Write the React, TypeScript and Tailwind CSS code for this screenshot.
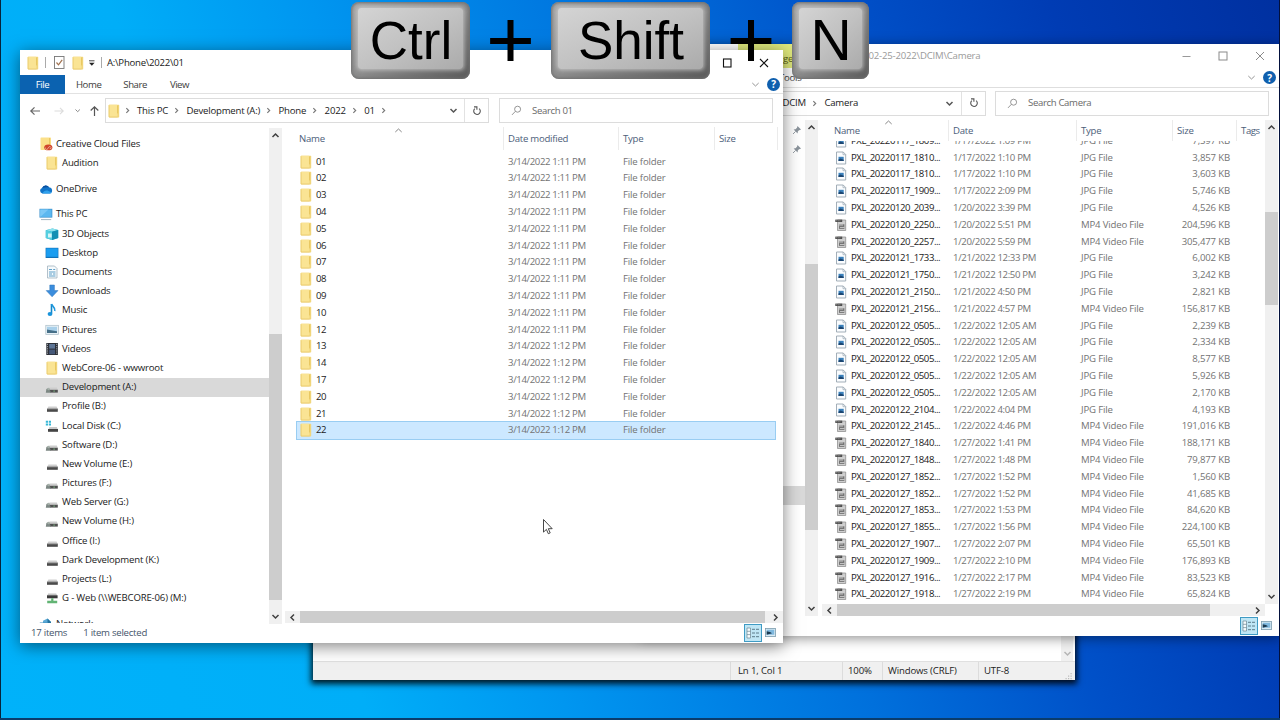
import React from "react";
import clsx from "clsx";

type IconName =
  | "folder"
  | "ccfolder"
  | "onedrive"
  | "pc"
  | "cube"
  | "desktop"
  | "docs"
  | "download"
  | "music"
  | "pictures"
  | "videos"
  | "drive"
  | "shared"
  | "windrive"
  | "netdrive"
  | "network";

interface NavEntry {
  label: string;
  icon: IconName;
  root?: boolean;
  gap?: boolean;
  active?: boolean;
}

const NAV: NavEntry[] = [
  { label: "Creative Cloud Files", icon: "ccfolder", root: true },
  { label: "Audition", icon: "folder" },
  { label: "OneDrive", icon: "onedrive", root: true, gap: true },
  { label: "This PC", icon: "pc", root: true, gap: true },
  { label: "3D Objects", icon: "cube" },
  { label: "Desktop", icon: "desktop" },
  { label: "Documents", icon: "docs" },
  { label: "Downloads", icon: "download" },
  { label: "Music", icon: "music" },
  { label: "Pictures", icon: "pictures" },
  { label: "Videos", icon: "videos" },
  { label: "WebCore-06 - wwwroot", icon: "folder" },
  { label: "Development (A:)", icon: "shared", active: true },
  { label: "Profile (B:)", icon: "drive" },
  { label: "Local Disk (C:)", icon: "windrive" },
  { label: "Software (D:)", icon: "shared" },
  { label: "New Volume (E:)", icon: "drive" },
  { label: "Pictures (F:)", icon: "shared" },
  { label: "Web Server (G:)", icon: "shared" },
  { label: "New Volume (H:)", icon: "shared" },
  { label: "Office (I:)", icon: "drive" },
  { label: "Dark Development (K:)", icon: "drive" },
  { label: "Projects (L:)", icon: "drive" },
  { label: "G - Web (\\\\WEBCORE-06) (M:)", icon: "netdrive" },
  { label: "Network", icon: "network", root: true, gap: true },
];

const FOLDERS: [string, string][] = [
  ["01", "1:11"],
  ["02", "1:11"],
  ["03", "1:11"],
  ["04", "1:11"],
  ["05", "1:11"],
  ["06", "1:11"],
  ["07", "1:11"],
  ["08", "1:11"],
  ["09", "1:11"],
  ["10", "1:11"],
  ["12", "1:11"],
  ["13", "1:12"],
  ["14", "1:12"],
  ["17", "1:12"],
  ["20", "1:12"],
  ["21", "1:12"],
  ["22", "1:12"],
];

const FILES: [string, string, "JPG" | "MP4", string][] = [
  ["20220117_1809", "1/17/2022 1:09 PM", "JPG", "7,597"],
  ["20220117_1810", "1/17/2022 1:10 PM", "JPG", "3,857"],
  ["20220117_1810", "1/17/2022 1:10 PM", "JPG", "3,603"],
  ["20220117_1909", "1/17/2022 2:09 PM", "JPG", "5,746"],
  ["20220120_2039", "1/20/2022 3:39 PM", "JPG", "4,526"],
  ["20220120_2250", "1/20/2022 5:51 PM", "MP4", "204,596"],
  ["20220120_2257", "1/20/2022 5:59 PM", "MP4", "305,477"],
  ["20220121_1733", "1/21/2022 12:33 PM", "JPG", "6,002"],
  ["20220121_1750", "1/21/2022 12:50 PM", "JPG", "3,242"],
  ["20220121_2150", "1/21/2022 4:50 PM", "JPG", "2,821"],
  ["20220121_2156", "1/21/2022 4:57 PM", "MP4", "156,817"],
  ["20220122_0505", "1/22/2022 12:05 AM", "JPG", "2,239"],
  ["20220122_0505", "1/22/2022 12:05 AM", "JPG", "2,334"],
  ["20220122_0505", "1/22/2022 12:05 AM", "JPG", "8,577"],
  ["20220122_0505", "1/22/2022 12:05 AM", "JPG", "5,926"],
  ["20220122_0505", "1/22/2022 12:05 AM", "JPG", "2,170"],
  ["20220122_2104", "1/22/2022 4:04 PM", "JPG", "4,193"],
  ["20220122_2145", "1/22/2022 4:46 PM", "MP4", "191,016"],
  ["20220127_1840", "1/27/2022 1:41 PM", "MP4", "188,171"],
  ["20220127_1848", "1/27/2022 1:48 PM", "MP4", "79,877"],
  ["20220127_1852", "1/27/2022 1:52 PM", "MP4", "1,560"],
  ["20220127_1852", "1/27/2022 1:52 PM", "MP4", "41,685"],
  ["20220127_1853", "1/27/2022 1:53 PM", "MP4", "84,620"],
  ["20220127_1855", "1/27/2022 1:56 PM", "MP4", "224,100"],
  ["20220127_1907", "1/27/2022 2:07 PM", "MP4", "65,501"],
  ["20220127_1909", "1/27/2022 2:10 PM", "MP4", "176,893"],
  ["20220127_1916", "1/27/2022 2:17 PM", "MP4", "83,523"],
  ["20220127_1918", "1/27/2022 2:19 PM", "MP4", "65,824"],
];

const FolderIcon = () => (
  <svg viewBox="0 0 14 14" className="h-[14px] w-[14px] shrink-0">
    <rect x="1.8" y="0.8" width="10.4" height="12.6" rx="0.6" fill="#f1d67c" />
    <rect x="1.8" y="0.8" width="8.6" height="12.2" rx="0.5" fill="#fae494" />
    <path d="M10.6 1.4v8" stroke="#e3c055" strokeWidth="0.8" />
    <path d="M2.1 1.3v11.7h8.5" stroke="#e6c565" strokeWidth="0.7" fill="none" />
  </svg>
);

const Drive = () => (
  <g>
    <path d="M3.4 7.5h8.2l1.2 2.5H2z" fill="#cfcfcf" />
    <rect x="2" y="9.8" width="10.8" height="3" fill="#4a4a4a" />
    <path d="M2.2 9.9h10.4" stroke="#9a9a9a" strokeWidth="0.8" />
  </g>
);

const Icon = ({ name }: { name: IconName }) => {
  if (name === "folder") return <FolderIcon />;
  return (
    <svg viewBox="0 0 14 14" className="h-[14px] w-[14px] shrink-0">
      {name === "ccfolder" && (
        <g>
          <rect x="1.5" y="0.5" width="10.5" height="12.4" rx="0.6" fill="#fbe08a" />
          <path d="M10.6 1v8" stroke="#e3bf55" strokeWidth="0.8" />
          <ellipse cx="9.3" cy="10.4" rx="4.1" ry="2.9" fill="#d0452a" />
          <path
            d="M7 10.4a1.3 1.1 0 1 0 1.9.9l1-1.4a1.3 1.1 0 1 1 .8 1.9"
            stroke="#f3c0ae"
            strokeWidth="0.7"
            fill="none"
          />
        </g>
      )}
      {name === "onedrive" && (
        <g>
          <path d="M3.4 11.5a2.9 2.9 0 0 1-.3-5.6 4 4 0 0 1 7-.6 3.2 3.2 0 0 1 1 6.2z" fill="#1174c9" />
          <path d="M3.4 11.5c1-2.6 4-3.8 6-2.6l3.5 1.6c-.4.7-1 1-1.8 1z" fill="#2fa0ec" />
          <path d="M3.1 5.9a4 4 0 0 1 7-.6C7.6 5.1 5 5.9 3.1 5.9z" fill="#0a4f9e" />
        </g>
      )}
      {name === "pc" && (
        <g>
          <rect x="0.5" y="1.8" width="12.8" height="8.8" fill="#3a90cc" />
          <rect x="1.2" y="2.5" width="11.4" height="7.4" fill="#5cb8f0" />
          <path d="M1.2 9.9V2.5h8.3z" fill="#7cc8f6" />
          <path d="M2 12.6h10.2" stroke="#a3b4bf" strokeWidth="1" />
        </g>
      )}
      {name === "cube" && (
        <g>
          <path d="M0.8 3.2 7.5 1.5 13.2 3v8L7 13 .8 11z" fill="#19a9c6" />
          <path d="M0.8 3.2 7.5 1.5 13.2 3 7 4.8z" fill="#8fe3ee" />
          <path d="M0.8 3.2 7 4.8V13L.8 11z" fill="#55cfe0" />
          <path d="M3 6.5h3.7v4H3z" fill="#d4f5f8" />
          <path d="M7 4.8 13.2 3v8L7 13z" fill="#1490b4" />
        </g>
      )}
      {name === "desktop" && (
        <g>
          <rect x="0.6" y="1.8" width="12.8" height="10.2" fill="#1171b8" />
          <rect x="1.2" y="2.4" width="11.6" height="8.4" fill="#1b9df0" />
        </g>
      )}
      {name === "docs" && (
        <g>
          <path d="M2.5 1h7L12 3.5V13H2.5z" fill="#f6fafc" stroke="#93a8b4" strokeWidth="0.7" />
          <path d="M4 4.5h3M4 7h6.5M4 9h3M8 9h2.5M4 11h6.5M8.2 4.5h2" stroke="#5f9fc8" strokeWidth="1" />
        </g>
      )}
      {name === "download" && (
        <path d="M4.8 1h4.6v5.6h3.6L7.1 12.8 1.2 6.6h3.6z" fill="#3b8ddd" stroke="#2a72b8" strokeWidth="0.5" />
      )}
      {name === "music" && (
        <g>
          <path d="M6.5 1v9.6" stroke="#1287c9" strokeWidth="1.6" />
          <path d="M6.5 1c.5 2.5 4.2 3 3.3 7" stroke="#1e97dc" strokeWidth="1.6" fill="none" />
          <ellipse cx="5" cy="11" rx="2.4" ry="1.9" fill="#1a94db" />
        </g>
      )}
      {name === "pictures" && (
        <g>
          <rect x="0.8" y="2.3" width="12.6" height="9.2" fill="#e8f1f6" stroke="#a9bcc6" strokeWidth="0.7" />
          <path d="M2 3.8h10v6.2H2z" fill="#a9d0ea" />
          <path d="M2 10V6.5l4 .8 6 1V10z" fill="#466f88" />
        </g>
      )}
      {name === "videos" && (
        <g>
          <rect x="1.3" y="1" width="11.6" height="12" fill="#2c3038" />
          <path d="M2.5 1.8v11M11.7 1.8v11" stroke="#b9bcc2" strokeWidth="0.8" strokeDasharray="1.2 1" />
          <rect x="4.2" y="2" width="5.8" height="4.6" fill="#5d7596" />
          <rect x="4.2" y="7.6" width="5.8" height="4.6" fill="#46597a" />
        </g>
      )}
      {name === "drive" && <Drive />}
      {name === "shared" && (
        <g>
          <path d="M4.5 7.6h7.4l1 2.6H3.5z" fill="#cdcdcd" />
          <rect x="5" y="9.8" width="7.8" height="2.8" fill="#505050" />
          <path d="M1.3 9.5c0-1.3 3.4-1.3 3.4 0l1.3 3.3H.8z" fill="#7c8783" />
          <circle cx="3.5" cy="9" r="1.2" fill="#a5b0aa" />
          <rect x="8.5" y="10.5" width="1.2" height="1.2" fill="#7fbf88" />
        </g>
      )}
      {name === "windrive" && (
        <g>
          <path d="M4.5 8h7.4l1 2.5H3.5z" fill="#c9c9c9" />
          <rect x="3" y="10" width="10" height="2.8" fill="#444" />
          <path d="M.8 1.7H3v2H.8zM3.8 1.7H6v2H3.8zM.8 4.5H3v2H.8zM3.8 4.5H6v2H3.8z" fill="#35b7d6" />
        </g>
      )}
      {name === "netdrive" && (
        <g>
          <path d="M3.2 2.5h8l1 2H2.2z" fill="#c4c4c4" />
          <rect x="2" y="4.3" width="10.6" height="3" fill="#3a3a3a" />
          <path d="M6.2 7.3h2.2v2.5h3.8v2.4H2.2V9.8h4z" fill="#62b474" />
        </g>
      )}
      {name === "network" && (
        <g>
          <path d="M4 3.8 8.5 1.5 12 5v6H4z" fill="#5aa9d6" />
          <path d="M8.5 1.5 12 5v6H8.5z" fill="#23729f" />
          <rect x="0.8" y="5.5" width="8" height="5" fill="#3f8fc0" />
        </g>
      )}
    </svg>
  );
};

const JpgIcon = () => (
  <svg viewBox="0 0 12 14" className="h-[14px] w-[12px] shrink-0">
    <path d="M1.5 1h6.7L10.7 3.5V13H1.5z" fill="#fafcfe" stroke="#98a6b1" strokeWidth="0.9" />
    <path d="M8 1v2.7h2.7" fill="none" stroke="#98a6b1" strokeWidth="0.7" />
    <rect x="3.5" y="5.8" width="5.2" height="4.2" fill="#3a80bb" />
    <path d="M3.5 10V8.5l2-1 3.2 1.3V10z" fill="#1c4570" />
  </svg>
);

const Mp4Icon = () => (
  <svg viewBox="0 0 12 14" className="h-[14px] w-[12px] shrink-0">
    <path d="M2.5 2h8.2v10.5H2.5z" fill="#cfcfcf" stroke="#858585" strokeWidth="0.7" />
    <path d="M0.3 1.6h6.9v2.4H0.3z" fill="#4a4a4a" />
    <path d="M1.2 2.8h5" stroke="#cfcfcf" strokeWidth="0.6" strokeDasharray="1 0.6" />
    <path d="M4 6.3h5.4v4.6H4z" fill="#757575" />
    <path d="M4 7h4M5 9.5h4.4" stroke="#e4e4e4" strokeWidth="0.7" />
  </svg>
);

const Chevron = ({ dir, className }: { dir: "up" | "down" | "left" | "right"; className?: string }) => {
  const paths = {
    up: "M1.5 6 4.5 3 7.5 6",
    down: "M1.5 3 4.5 6 7.5 3",
    left: "M6 1.5 3 4.5 6 7.5",
    right: "M3 1.5 6 4.5 3 7.5",
  };
  return (
    <svg viewBox="0 0 9 9" className={clsx("shrink-0", className ?? "h-[9px] w-[9px]")}>
      <path d={paths[dir]} fill="none" stroke="currentColor" strokeWidth="1.5" />
    </svg>
  );
};

const ThinChevron = ({ dir, className }: { dir: "up" | "down"; className?: string }) => (
  <svg viewBox="0 0 9 9" className={clsx("h-[9px] w-[9px] shrink-0", className)}>
    <path
      d={dir === "up" ? "M1.3 6 4.5 3 7.7 6" : "M1.3 3 4.5 6 7.7 3"}
      fill="none"
      stroke="currentColor"
      strokeWidth="0.9"
    />
  </svg>
);

const HelpBadge = () => (
  <span className="flex h-[13px] w-[13px] shrink-0 items-center justify-center rounded-full bg-[#0f5fae] text-[10px] leading-none font-bold text-white">
    ?
  </span>
);

const Refresh = () => (
  <svg viewBox="0 0 10 10" className="h-[10px] w-[10px]">
    <path d="M2.8 2.7a3.3 3.3 0 1 0 4.3-.1" fill="none" stroke="#555" strokeWidth="1.1" />
    <path d="M2 .9h2.9v2.9" fill="none" stroke="#555" strokeWidth="1.1" />
  </svg>
);

const SearchBox = ({ label }: { label: string }) => (
  <div className="flex h-[25px] w-[274px] items-center border border-[#dcdcdc] bg-white pl-[11px]">
    <svg viewBox="0 0 11 11" className="h-[11px] w-[11px]">
      <circle cx="6.6" cy="4.2" r="3" fill="none" stroke="#8a8a8a" strokeWidth="0.9" />
      <path d="M4.3 6.4 1 9.9" stroke="#8a8a8a" strokeWidth="0.9" />
    </svg>
    <span className="ml-[10px] tracking-[-0.35px] text-[#6a6a6a]">{label}</span>
  </div>
);

const ViewButtons = () => (
  <div className="flex items-center">
    <span className="flex h-[18px] w-[18px] items-center justify-center border border-[#3f9bc4] bg-[#bfe6f5]">
      <svg viewBox="0 0 14 12" className="h-[12px] w-[14px]">
        <path d="M1 1h3.5v10H1zM1 4.3h3.5M1 7.6h3.5" fill="#f5fbfd" stroke="#6d8793" strokeWidth="0.7" />
        <path d="M6 2.3h3M10 2.3h3M6 6h3M10 6h3M6 9.7h3M10 9.7h3" stroke="#51717f" strokeWidth="0.9" />
      </svg>
    </span>
    <svg viewBox="0 0 11 9" className="ml-[3px] h-[9px] w-[11px]">
      <rect x="0.4" y="0.4" width="10.2" height="8.2" fill="#dcebf3" stroke="#7b9cad" strokeWidth="0.8" />
      <rect x="1.7" y="1.7" width="7.6" height="5" fill="#7fb8de" />
      <path d="M1.7 3.2 5 4l2 1.3-5.3 1.4z" fill="#1b3a50" />
    </svg>
  </div>
);

const VScroll = ({ thumb }: { thumb: string }) => (
  <div className="relative flex w-[13px] shrink-0 flex-col items-center justify-between bg-[#f0f0f0] py-[3px] text-[#404040]">
    <Chevron dir="up" />
    <div className={clsx("absolute left-0 w-full bg-[#cdcdcd]", thumb)} />
    <Chevron dir="down" />
  </div>
);

const HScroll = ({ thumb }: { thumb: string }) => (
  <div className="flex h-[12px] shrink-0 items-center bg-[#f0f0f0] text-[#404040]">
    <Chevron dir="left" className="mr-[3px] ml-[3px] h-[9px] w-[9px]" />
    <div className={clsx("h-full bg-[#cdcdcd]", thumb)} />
    <Chevron dir="right" className="mr-[3px] ml-auto h-[9px] w-[9px]" />
  </div>
);

const Crumb = ({ children, last }: { children: React.ReactNode; last?: boolean }) => (
  <>
    <span className="tracking-[-0.2px]">{children}</span>
    {!last && <Chevron dir="right" className="mr-[6.2px] ml-[5.2px] h-[7px] w-[7px] text-[#777]" />}
  </>
);

const Col = ({ children, className }: { children?: React.ReactNode; className: string }) => (
  <div className={clsx("flex h-full items-center border-r border-[#ebebeb] text-[#4c607a]", className)}>
    {children}
  </div>
);

const Pin = () => (
  <svg viewBox="0 0 10 10" className="h-[10px] w-[10px]">
    <path d="M5.5 1 9 4.5l-1 .5-1 .2L5.8 6.5l-.2 1.9L1.6 4.4l1.900-.2L5 2.700z" fill="currentColor" />
    <path d="M3.6 6.4 1 9" stroke="currentColor" strokeWidth="0.9" />
  </svg>
);

const CameraWindow = () => (
  <div className="absolute top-[44px] left-[640px] flex h-[592px] w-[639px] flex-col bg-white text-[#1a1a1a] shadow-[0_2px_12px_rgba(0,0,0,0.45)]">
    <div className="flex h-[24px] shrink-0 items-center text-[#9a9a9a]">
      <div className="ml-[98px] flex h-full w-[74px] items-center justify-center bg-[#dfe87c] pt-[5px] pl-[2px] text-[#5c6316]">
        Manage
      </div>
      <span className="ml-[14px] tracking-[-0.2px]">A:\Phone\02-25-2022\DCIM\Camera</span>
      <div className="mr-[14px] ml-auto flex items-center gap-[27px]">
        <svg viewBox="0 0 10 10" className="h-[10px] w-[10px]">
          <path d="M1.5 5.5h8" stroke="#999" />
        </svg>
        <svg viewBox="0 0 10 10" className="h-[10px] w-[10px]">
          <rect x="1" y="1" width="8" height="8" fill="none" stroke="#8a8a8a" />
        </svg>
        <svg viewBox="0 0 10 10" className="h-[10px] w-[10px]">
          <path d="m1 1 8 8M9 1 1 9" stroke="#8a8a8a" />
        </svg>
      </div>
    </div>
    <div className="flex h-[20px] shrink-0 items-center border-b border-[#dedede]">
      <span className="ml-[139px] text-[#444]">Tools</span>
      <ThinChevron dir="down" className="ml-auto text-[#888]" />
      <span className="mr-[3px] ml-[7px]">
        <HelpBadge />
      </span>
    </div>
    <div className="flex h-[30px] shrink-0 items-center">
      <div className="ml-[20px] flex h-[25px] w-[326px] items-center border border-[#dcdcdc] pl-[121.5px]">
        <Crumb>DCIM</Crumb>
        <Crumb last>Camera</Crumb>
        <Chevron dir="down" className="ml-auto h-[9px] w-[9px] text-[#555]" />
        <div className="ml-[7px] flex h-full w-[24px] items-center justify-center border-l border-[#e2e2e2]">
          <Refresh />
        </div>
      </div>
      <div className="ml-[9px]">
        <SearchBox label="Search Camera" />
      </div>
    </div>
    <div className="flex h-[498px] shrink-0">
      <div className="flex w-[165px] shrink-0 flex-col items-end">
        <div className="mt-[7px] mr-[3px] flex flex-col gap-[9px] text-[#8b949c]">
          <Pin />
          <Pin />
        </div>
        <div className="mt-[332px] h-[19px] w-full bg-[#d9d9d9]" />
      </div>
      <div className="mt-[2px] flex h-[496px] w-[12px] shrink-0">
        <VScroll thumb="top-[144px] h-[266px]" />
      </div>
      <div className="ml-[5px] flex w-[443px] shrink-0 flex-col">
        <div className="relative flex h-[23px] shrink-0 items-center pt-[2px]">
          <ThinChevron dir="up" className="absolute top-0 left-[62px] text-[#777]" />
          <Col className="w-[127px] pl-[12px]">Name</Col>
          <Col className="w-[128px] pl-[4px]">Date</Col>
          <Col className="w-[96px] pl-[4px]">Type</Col>
          <Col className="w-[64px] pl-[4px]">Size</Col>
          <span className="pl-[4px] tracking-[-0.4px] text-[#4c607a]">Tags</span>
        </div>
        <div className="h-[463px] shrink-0 overflow-hidden">
          <div className="mt-[-8.5px]">
            {FILES.map(([name, date, type, size], i) => (
              <div key={i} className="flex h-[16.8px] items-center text-[#737373]">
                <span className="ml-[13px]">{type === "JPG" ? <JpgIcon /> : <Mp4Icon />}</span>
                <span className="ml-[4px] w-[102px] tracking-[-0.45px] whitespace-nowrap text-[#1a1a1a]">
                  PXL_{name}...
                </span>
                <span className="w-[128px] tracking-[-0.35px] whitespace-nowrap">{date}</span>
                <span className="w-[89px] tracking-[-0.17px] whitespace-nowrap">
                  {type === "JPG" ? "JPG File" : "MP4 Video File"}
                </span>
                <span className="w-[60px] text-right tracking-[-0.17px] whitespace-nowrap">{size} KB</span>
              </div>
            ))}
          </div>
        </div>
        <HScroll thumb="w-[373px]" />
      </div>
      <div className="mt-[2px] flex h-[484px] w-[13px] shrink-0">
        <VScroll thumb="top-[92px] h-[93px]" />
      </div>
    </div>
    <div className="flex flex-1 items-center justify-end pr-[7px] pb-px">
      <ViewButtons />
    </div>
  </div>
);

const PhoneWindow = () => (
  <div className="absolute top-[50px] left-[20px] flex h-[593px] w-[763px] flex-col bg-white text-[#1a1a1a] shadow-[0_3px_16px_rgba(0,0,0,0.5)]">
    <div className="flex h-[25px] shrink-0 items-center">
      <span className="ml-[6px]">
        <FolderIcon />
      </span>
      <span className="ml-[5px] h-[11px] w-px bg-[#aaa]" />
      <svg viewBox="0 0 11 13" className="ml-[8px] h-[13px] w-[11px]">
        <rect x="0.5" y="0.5" width="9.5" height="12" fill="#fff" stroke="#777" strokeWidth="0.9" />
        <path d="m2.5 6.5 2 2.3 3.7-5" fill="none" stroke="#a0714f" strokeWidth="1.2" />
      </svg>
      <span className="ml-[6px]">
        <FolderIcon />
      </span>
      <svg viewBox="0 0 8 8" className="ml-[3px] h-[8px] w-[8px]">
        <path d="M1 1.8h5.5" stroke="#333" strokeWidth="0.9" />
        <path d="M1 3.8h5.6L3.8 6.8z" fill="#222" />
      </svg>
      <span className="ml-[5px] h-[11px] w-px bg-[#aaa]" />
      <span className="ml-[5px]">A:\Phone\2022\01</span>
      <div className="mr-[14px] ml-auto flex items-center gap-[27px]">
        <svg viewBox="0 0 10 10" className="h-[10px] w-[10px]">
          <rect x="1.5" y="1" width="7.5" height="8" fill="none" stroke="#111" strokeWidth="1.1" />
        </svg>
        <svg viewBox="0 0 10 10" className="h-[10px] w-[10px]">
          <path d="m1 1 8 8M9 1 1 9" stroke="#111" strokeWidth="1.1" />
        </svg>
      </div>
    </div>
    <div className="flex h-[19px] shrink-0 items-center border-b border-[#e2e2e2] pt-px tracking-[-0.45px] text-[#3c3c3c]">
      <div className="mt-[-1px] flex h-[19px] w-[45px] items-center justify-center self-start bg-[#0b62b0] pt-px text-white">
        File
      </div>
      <span className="ml-[11px]">Home</span>
      <span className="ml-[22px]">Share</span>
      <span className="ml-[23px]">View</span>
      <ThinChevron dir="down" className="ml-auto text-[#888]" />
      <span className="mt-[-1px] mr-[3px] ml-[7px]">
        <HelpBadge />
      </span>
    </div>
    <div className="flex h-[33px] shrink-0 items-center">
      <svg viewBox="0 0 72 12" className="ml-[9px] h-[12px] w-[72px]">
        <path d="M11 6H2M5.5 2.3 1.8 6l3.7 3.7" fill="none" stroke="#666" strokeWidth="1.2" />
        <path d="M25.5 6h8.5M31 2.8 34.2 6 31 9.2" fill="none" stroke="#dcdcdc" strokeWidth="1.1" />
        <path d="m46.5 4.5 2.2 2.2 2.2-2.2" fill="none" stroke="#888" strokeWidth="1" />
        <path d="M65.5 11V2M61.7 5.5l3.8-3.7 3.8 3.7" fill="none" stroke="#555" strokeWidth="1.2" />
      </svg>
      <div className="ml-[4px] flex h-[25px] w-[384px] items-center border border-[#dcdcdc] pl-[1px]">
        <FolderIcon />
        <Chevron dir="right" className="mr-[6px] ml-[3px] h-[7px] w-[7px] text-[#777]" />
        <Crumb>This PC</Crumb>
        <Crumb>Development (A:)</Crumb>
        <Crumb>Phone</Crumb>
        <Crumb>2022</Crumb>
        <Crumb>01</Crumb>
        <Chevron dir="down" className="ml-auto h-[9px] w-[9px] text-[#555]" />
        <div className="ml-[6px] flex h-full w-[24px] items-center justify-center border-l border-[#e2e2e2]">
          <Refresh />
        </div>
      </div>
      <div className="ml-[10px]">
        <SearchBox label="Search 01" />
      </div>
    </div>
    <div className="flex h-[496px] shrink-0">
      <div className="w-[249px] shrink-0 overflow-hidden pt-[7.5px] tracking-[-0.17px]">
        {NAV.map((entry) => (
          <div
            key={entry.label}
            className={clsx(
              "flex h-[19.2px] items-center whitespace-nowrap",
              entry.root ? "pl-[19px]" : "pl-[25px]",
              entry.gap && "mt-[6.4px]",
              entry.active && "bg-[#d9d9d9]"
            )}
          >
            <Icon name={entry.icon} />
            <span className="ml-[3px]">{entry.label}</span>
          </div>
        ))}
      </div>
      <div className="mt-px flex h-[496px] w-[13px] shrink-0">
        <VScroll thumb="top-[206px] h-[266px]" />
      </div>
      <div className="ml-[3px] flex flex-1 flex-col">
        <div className="relative flex h-[23px] shrink-0 items-center">
          <ThinChevron dir="up" className="absolute top-[-1px] left-[109px] text-[#777]" />
          <Col className="w-[219px] pl-[14px]">Name</Col>
          <Col className="w-[115px] pl-[4px]">Date modified</Col>
          <Col className="w-[96px] pl-[4px]">Type</Col>
          <Col className="w-[63px] pl-[4px]">Size</Col>
        </div>
        <div className="mt-[3.2px] flex-1">
          {FOLDERS.map(([name, time]) => (
            <div
              key={name}
              className={clsx(
                "ml-[12px] flex h-[16.8px] w-[478px] items-center text-[#737373]",
                name === "22" && "bg-[#cce8ff] outline outline-[#99cdf2] outline-offset-[-0.5px]"
              )}
            >
              <span className="ml-[2px]">
                <FolderIcon />
              </span>
              <span className="ml-[3px] w-[192px] tracking-[-0.5px] text-[#1a1a1a]">{name}</span>
              <span className="w-[115px] tracking-[-0.36px] whitespace-nowrap">3/14/2022 {time} PM</span>
              <span className="tracking-[-0.17px]">File folder</span>
            </div>
          ))}
        </div>
        <HScroll thumb="w-[465px]" />
      </div>
    </div>
    <div className="flex flex-1 items-center pl-[11px] text-[#44546a]">
      <span>17 items</span>
      <span className="ml-[16px]">1 item selected</span>
      <div className="mr-[7px] mb-px ml-auto">
        <ViewButtons />
      </div>
    </div>
  </div>
);

const Notepad = () => (
  <div className="absolute top-[560px] left-[313px] flex h-[120px] w-[762px] flex-col bg-white tracking-[-0.15px] text-[#222] shadow-[0_2px_6px_2px_rgba(0,0,0,0.85)]">
    <div className="flex flex-1 justify-end">
      <div className="mr-[2px] flex w-[12px] items-end justify-center bg-[#f0f0f0] pb-[3px] text-[#b5b5b5]">
        <Chevron dir="down" />
      </div>
    </div>
    <div className="flex h-[19px] items-center border-t border-[#e0e0e0] bg-[#f0f0f0]">
      <div className="ml-[417px] flex h-full w-[112px] items-center border-l border-[#dcdcdc] pl-[7px]">Ln 1, Col 1</div>
      <div className="flex h-full w-[40px] items-center border-l border-[#dcdcdc] pl-[5px]">100%</div>
      <div className="flex h-full w-[96px] items-center border-l border-[#dcdcdc] pl-[5px]">Windows (CRLF)</div>
      <div className="flex h-full items-center border-l border-[#dcdcdc] pl-[5px]">UTF-8</div>
      <svg viewBox="0 0 8 8" className="mr-[2px] ml-auto h-[8px] w-[8px] self-end">
        <path d="M5.5 1h1.2v1.2H5.5zM3 3.5h1.2v1.2H3zM5.5 3.5h1.2v1.2H5.5zM.5 6h1.2v1.2H.5zM3 6h1.2v1.2H3zM5.5 6h1.2v1.2H5.5z" fill="#bbb" />
      </svg>
    </div>
  </div>
);

const Key = ({ children, className }: { children: React.ReactNode; className: string }) => (
  <div
    className={clsx(
      "flex h-[77px] rounded-[8px] bg-linear-to-br from-[#a9a9a9] via-[#8c8c8c] to-[#5a5a5a] px-[7px] pt-[6px] pb-[10px] shadow-[inset_0_0_3px_1px_#707070]",
      className
    )}
  >
    <div className="flex flex-1 items-center justify-center rounded-[3px] bg-linear-to-br from-[#d4d4d4] via-[#c2c2c2] to-[#ababab] pt-[3px] pl-px shadow-[0_0_4px_1px_rgba(215,215,215,0.75)]">
      {children}
    </div>
  </div>
);

const Plus = ({ className }: { className: string }) => (
  <div className={clsx("flex h-[77px] items-center justify-center pb-[4px] text-[84px] leading-none", className)}>
    +
  </div>
);

const Shortcut = () => (
  <div className="absolute top-[2px] left-[351px] flex font-['Liberation_Sans',Arial,sans-serif] tracking-normal text-black">
    <Key className="w-[119px] text-[53px] leading-none">Ctrl</Key>
    <Plus className="w-[81px]" />
    <Key className="w-[159px] text-[53px] leading-none">Shift</Key>
    <Plus className="w-[82px]" />
    <Key className="w-[77px] text-[57px] leading-none">N</Key>
  </div>
);

export default function App() {
  return (
    <div className="relative h-[720px] w-[1280px] overflow-hidden bg-[linear-gradient(70deg,#00b2fa_0%,#00aef8_24%,#0096f0_37%,#0070dc_57%,#0050c8_72%,#003cb4_85%,#0030a0_100%)] font-['Open_Sans','Noto_Sans',sans-serif] text-[9.6px] leading-[14px] tracking-[-0.25px]">
      <Notepad />
      <CameraWindow />
      <PhoneWindow />
      <svg viewBox="0 0 12 18" className="absolute top-[518px] left-[542px] h-[18px] w-[12px]">
        <path d="M1.5 1.5v12.6l2.9-2.7 1.9 4.3 1.9-.8-1.9-4.2h3.9z" fill="#fff" stroke="#333" strokeWidth="0.9" />
      </svg>
      <Shortcut />
      <div className="absolute inset-y-0 left-0 w-px bg-[#06243c]" />
      <div className="absolute inset-y-0 right-0 w-px bg-[#02103c]" />
      <div className="absolute inset-x-0 bottom-0 h-[2px] bg-[#0a3c6c]" />
    </div>
  );
}
